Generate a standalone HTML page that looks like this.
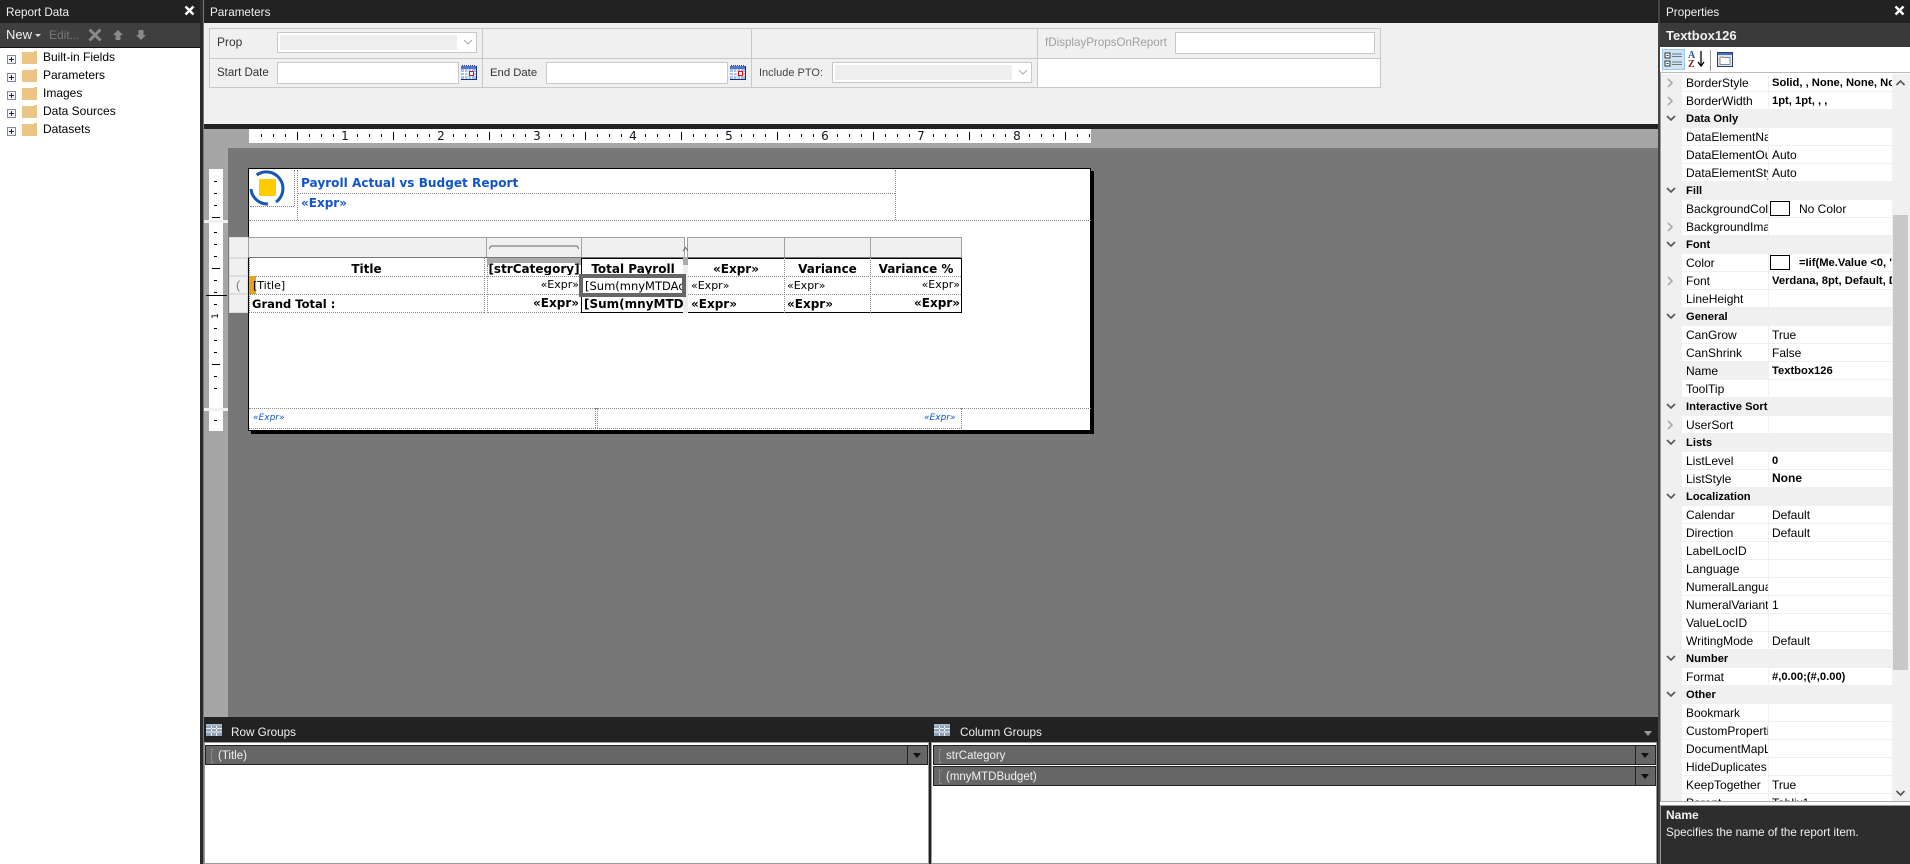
<!DOCTYPE html>
<html><head><meta charset="utf-8"><title>Report Designer</title>
<style>
html,body{margin:0;padding:0;width:1910px;height:864px;overflow:hidden;background:#222}
body{position:relative;font:12px/16px "Liberation Sans",sans-serif;color:#000}
.a{position:absolute}
.t{position:absolute;white-space:nowrap;line-height:16px}
.v{font-family:"DejaVu Sans","Liberation Sans",sans-serif}
.w{color:#f1f1f1}
.ln{position:absolute;background:#c8c8c8}
.inp{position:absolute;background:#fff;border:1px solid #c8c8c8;box-sizing:border-box}
.dh{position:absolute;border-top:1px dotted #888;height:0}
.dv{position:absolute;border-left:1px dotted #888;width:0}
.hc{position:absolute;background:#f0f0f0;border:1px solid #a0a0a0;box-sizing:border-box}
.rh{position:absolute;background:#f0f0f0;left:229px;width:19px;border:1px solid #ddd;box-sizing:border-box}
.b{font-weight:bold}
.cen{text-align:center}
.rgt{text-align:right}
.h{font-size:12px;font-weight:bold;font-family:"DejaVu Sans",sans-serif;line-height:16px}
.s{font-size:11px;font-family:"DejaVu Sans",sans-serif;line-height:16px}
.tk{position:absolute;background:#000}
.n{position:absolute;font:12px/14px "DejaVu Sans",sans-serif;background:#fff;width:12px;text-align:center;color:#112}
/* properties */
#pg{position:absolute;left:1661px;top:74px;width:231px;height:727px;overflow:hidden;background:#fff}
.r{position:relative;height:18px;white-space:nowrap;line-height:18px}
.r .l{position:absolute;left:25px;width:82px;height:17px;overflow:hidden}
.r .m{position:absolute;left:0;top:0;width:21px;height:18px;background:#f0f0f0}
.r .d{position:absolute;left:107px;top:0;width:1px;height:17px;background:#f0f0f0}
.r .u{position:absolute;left:21px;right:0;top:17px;height:1px;background:#f0f0f0}
.r .x{position:absolute;left:111px;width:120px;overflow:hidden;height:17px}
.r .x.b{font-size:11.2px;top:1px;height:16px;line-height:17px}
.r.c{background:#f0f0f0;font-weight:bold;font-size:11.2px}
.r.c .l{width:200px;top:1px;height:16px;line-height:17px}
.r svg{position:absolute;left:5px;top:4px}
.sel .l{background:#f0f0f0;left:21px;padding-left:4px;width:82px}
.gb{position:absolute;background:#666;border:1px solid #222;box-sizing:border-box;height:20px;color:#f1f1f1;font-size:11.5px}
.gb i{position:absolute;left:5px;top:3px;width:2px;height:12px;border:1px solid #888;border-right:none}
.gb span{position:absolute;top:2px;white-space:nowrap}
.gb b{position:absolute;right:0;top:0;bottom:0;width:19px;border-left:1px solid #222}
.gb b:after{content:"";position:absolute;left:5px;top:7px;border:4px solid transparent;border-top:5px solid #111;border-bottom:none}
</style></head>
<body>

<!-- LEFT PANEL -->
<div class="a" style="left:0;top:0;width:200px;height:864px;background:#fff"></div>
<div class="a" style="left:0;top:0;width:203px;height:23px;background:#222"></div>
<div class="a" style="left:0;top:23px;width:200px;height:24px;background:#3f3f3f;border-bottom:1px solid #111"></div>
<div class="a" style="left:200px;top:0;width:3px;height:864px;background:#2a2a2a"></div>
<div class="a" style="left:203px;top:0;width:1px;height:864px;background:#777"></div>
<div class="t w" style="left:6px;top:5px;font-size:11.7px">Report Data</div>
<svg class="a" style="left:184px;top:5px" width="11" height="11"><path d="M1.5 1.5L9.5 9.5M9.5 1.5L1.5 9.5" stroke="#fff" stroke-width="2.4"/></svg>
<div class="t w" style="left:6px;top:27px;font-size:13px">New</div>
<div class="a" style="left:35px;top:34px;border:3px solid transparent;border-top:3px solid #ddd;border-bottom:none"></div>
<div class="t" style="left:49px;top:27px;color:#777;font-size:12px">Edit...</div>
<svg class="a" style="left:88px;top:28px" width="14" height="14"><path d="M1.5 1.5L12.5 12.5M12.5 1.5L1.5 12.5" stroke="#8a8a8a" stroke-width="3"/></svg>
<svg class="a" style="left:112px;top:29px" width="12" height="12"><path d="M6 1L11 6H8.5V11H3.5V6H1Z" fill="#8a8a8a"/></svg>
<svg class="a" style="left:135px;top:29px" width="12" height="12"><path d="M6 11L11 6H8.5V1H3.5V6H1Z" fill="#8a8a8a"/></svg>

<!-- tree -->
<svg class="a" style="left:7px;top:49px" width="32" height="100">
 <g>
  <g transform="translate(0,0)"><rect x=".5" y="6.5" width="8" height="8" fill="#f4f6fb" stroke="#7f8aa0"/><path d="M2 10.5H7M4.5 8V13" stroke="#223" stroke-width="1"/><path d="M15 3H27V2H30V15H15Z" fill="#eac584"/></g>
  <g transform="translate(0,18)"><rect x=".5" y="6.5" width="8" height="8" fill="#f4f6fb" stroke="#7f8aa0"/><path d="M2 10.5H7M4.5 8V13" stroke="#223" stroke-width="1"/><path d="M15 3H27V2H30V15H15Z" fill="#eac584"/></g>
  <g transform="translate(0,36)"><rect x=".5" y="6.5" width="8" height="8" fill="#f4f6fb" stroke="#7f8aa0"/><path d="M2 10.5H7M4.5 8V13" stroke="#223" stroke-width="1"/><path d="M15 3H27V2H30V15H15Z" fill="#eac584"/></g>
  <g transform="translate(0,54)"><rect x=".5" y="6.5" width="8" height="8" fill="#f4f6fb" stroke="#7f8aa0"/><path d="M2 10.5H7M4.5 8V13" stroke="#223" stroke-width="1"/><path d="M15 3H27V2H30V15H15Z" fill="#eac584"/></g>
  <g transform="translate(0,72)"><rect x=".5" y="6.5" width="8" height="8" fill="#f4f6fb" stroke="#7f8aa0"/><path d="M2 10.5H7M4.5 8V13" stroke="#223" stroke-width="1"/><path d="M15 3H27V2H30V15H15Z" fill="#eac584"/></g>
 </g>
</svg>
<div class="t" style="left:43px;top:49px">Built-in Fields</div>
<div class="t" style="left:43px;top:67px">Parameters</div>
<div class="t" style="left:43px;top:85px">Images</div>
<div class="t" style="left:43px;top:103px">Data Sources</div>
<div class="t" style="left:43px;top:121px">Datasets</div>

<!-- PARAMETERS -->
<div class="a" style="left:204px;top:0;width:1456px;height:23px;background:#222"></div>
<div class="t w" style="left:210px;top:5px;font-size:11.7px">Parameters</div>
<div class="a" style="left:204px;top:23px;width:1456px;height:101px;background:#f0f0f0"></div>
<div class="a" style="left:204px;top:124px;width:1456px;height:5px;background:#222"></div>

<div class="a" style="left:1037px;top:58px;width:343px;height:30px;background:#fff"></div>
<div class="ln" style="left:209px;top:28px;width:1172px;height:1px"></div>
<div class="ln" style="left:209px;top:58px;width:1172px;height:1px"></div>
<div class="ln" style="left:209px;top:87px;width:1172px;height:1px"></div>
<div class="ln" style="left:209px;top:28px;width:1px;height:60px"></div>
<div class="ln" style="left:482px;top:28px;width:1px;height:60px"></div>
<div class="ln" style="left:751px;top:28px;width:1px;height:60px"></div>
<div class="ln" style="left:1037px;top:28px;width:1px;height:60px"></div>
<div class="ln" style="left:1380px;top:28px;width:1px;height:60px"></div>

<div class="t" style="left:217px;top:34px;color:#333">Prop</div>
<div class="inp" style="left:277px;top:32px;width:200px;height:21px"><div class="a" style="left:2px;top:2px;width:177px;height:15px;background:#eee"></div></div>
<svg class="a" style="left:463px;top:39px" width="10" height="7"><path d="M1 1L5 5L9 1" fill="none" stroke="#aaa"/></svg>

<div class="t" style="left:217px;top:65px;color:#333;font-size:11.5px">Start Date</div>
<div class="inp" style="left:277px;top:62px;width:182px;height:22px"></div>
<svg class="a" style="left:461px;top:65px" width="16" height="15"><path d="M1 0.5H15" stroke="#2a3a70" stroke-dasharray="1 1"/><rect x="0" y="1" width="16" height="3" fill="#4f76cc"/><rect x="0" y="4" width="16" height="10" fill="#a9c0ee"/><path d="M0 7.5H16M0 10.5H16M3.5 4V14M7 4V14M10.5 4V14" stroke="#fff"/><path d="M0 14.5H16M15.5 1V15" stroke="#1c2f6e"/><rect x="8.5" y="6.5" width="4" height="4" fill="#fff" stroke="#e01010"/></svg>

<div class="t" style="left:490px;top:65px;color:#333;font-size:11.3px">End Date</div>
<div class="inp" style="left:546px;top:62px;width:182px;height:22px"></div>
<svg class="a" style="left:730px;top:65px" width="16" height="15"><path d="M1 0.5H15" stroke="#2a3a70" stroke-dasharray="1 1"/><rect x="0" y="1" width="16" height="3" fill="#4f76cc"/><rect x="0" y="4" width="16" height="10" fill="#a9c0ee"/><path d="M0 7.5H16M0 10.5H16M3.5 4V14M7 4V14M10.5 4V14" stroke="#fff"/><path d="M0 14.5H16M15.5 1V15" stroke="#1c2f6e"/><rect x="8.5" y="6.5" width="4" height="4" fill="#fff" stroke="#e01010"/></svg>

<div class="t" style="left:759px;top:65px;color:#444;font-size:11px">Include PTO:</div>
<div class="inp" style="left:832px;top:62px;width:200px;height:21px"><div class="a" style="left:2px;top:2px;width:177px;height:15px;background:#eee"></div></div>
<svg class="a" style="left:1018px;top:69px" width="10" height="7"><path d="M1 1L5 5L9 1" fill="none" stroke="#aaa"/></svg>

<div class="t" style="left:1045px;top:35px;color:#a0a0a0;font-size:11.6px">fDisplayPropsOnReport</div>
<div class="inp" style="left:1175px;top:32px;width:200px;height:22px"></div>

<!-- DESIGN AREA -->
<div class="a" style="left:204px;top:129px;width:1456px;height:19px;background:#a5a5a5"></div>
<div class="a" style="left:204px;top:148px;width:1456px;height:569px;background:#777"></div>
<div class="a" style="left:204px;top:148px;width:24px;height:569px;background:#a5a5a5"></div>

<!-- top ruler -->
<div class="a" style="left:249px;top:129px;width:842px;height:14px;background:#fff"></div>
<div class="a" style="left:261px;top:134px;width:830px;height:3px;background:repeating-linear-gradient(90deg,#000 0,#000 1px,transparent 1px,transparent 12px)"></div>
<div class="a" style="left:297px;top:132px;width:794px;height:8px;background:repeating-linear-gradient(90deg,#000 0,#000 1px,transparent 1px,transparent 96px)"></div>
<div class="n" style="left:339px;top:129px">1</div><div class="n" style="left:435px;top:129px">2</div><div class="n" style="left:531px;top:129px">3</div><div class="n" style="left:627px;top:129px">4</div><div class="n" style="left:723px;top:129px">5</div><div class="n" style="left:819px;top:129px">6</div><div class="n" style="left:915px;top:129px">7</div><div class="n" style="left:1011px;top:129px">8</div>

<!-- vertical ruler -->
<div class="a" style="left:209px;top:169px;width:14px;height:262px;background:#fff"></div>
<div class="a" style="left:214px;top:181px;width:3px;height:36px;background:repeating-linear-gradient(180deg,#000 0,#000 1px,transparent 1px,transparent 12px)"></div>
<div class="tk" style="left:212px;top:217px;width:8px;height:1px"></div>
<div class="a" style="left:204px;top:220px;width:24px;height:3px;background:#f0f0f0"></div>
<div class="a" style="left:214px;top:232px;width:3px;height:168px;background:repeating-linear-gradient(180deg,#000 0,#000 1px,transparent 1px,transparent 12px)"></div>
<div class="tk" style="left:212px;top:268px;width:8px;height:1px"></div>
<div class="tk" style="left:212px;top:364px;width:8px;height:1px"></div>
<div class="tk" style="left:206px;top:295px;width:21px;height:1px"></div>
<div class="t" style="left:209px;top:309px;width:14px;text-align:center;font:9px/14px 'DejaVu Sans',sans-serif;transform:rotate(-90deg);background:#fff;height:14px">1</div>
<div class="a" style="left:204px;top:408px;width:24px;height:3px;background:#f0f0f0"></div>
<div class="tk" style="left:214px;top:420px;width:3px;height:1px"></div>

<!-- PAGE -->
<div class="a" style="left:251px;top:171px;width:843px;height:263px;background:#000"></div>
<div class="a" style="left:248px;top:168px;width:843px;height:263px;background:#fff;border:1px solid #000;box-sizing:border-box"></div>

<!-- logo -->
<svg class="a" style="left:249px;top:169px" width="38" height="38">
 <path d="M7.7 6A16.5 16.5 0 0 1 27 33" fill="none" stroke="#1656b4" stroke-width="3"/>
 <path d="M2 20A16.5 16.5 0 0 0 19 35" fill="none" stroke="#1656b4" stroke-width="3"/>
 <rect x="10" y="10" width="17" height="17" rx="1" fill="#ffcc00"/>
</svg>
<div class="dv" style="left:294px;top:170px;height:36px"></div>
<div class="dh" style="left:250px;top:206px;width:44px"></div>
<div class="dv" style="left:297px;top:170px;height:50px"></div>
<div class="dh" style="left:297px;top:193px;width:598px"></div>
<div class="dv" style="left:895px;top:170px;height:50px"></div>
<div class="dh" style="left:249px;top:220px;width:842px"></div>
<div class="t b v" style="left:301px;top:174px;font-size:12.1px;color:#1155cc;line-height:18px">Payroll Actual vs Budget Report</div>
<div class="t b v" style="left:301px;top:195px;font-size:12px;color:#1155cc">«Expr»</div>

<!-- tablix handles -->
<div class="hc" style="left:229px;top:237px;width:20px;height:21px;border-color:#ddd"></div>
<div class="hc" style="left:248px;top:237px;width:239px;height:21px"></div>
<div class="hc" style="left:486px;top:237px;width:96px;height:21px"></div>
<div class="hc" style="left:581px;top:237px;width:104px;height:21px"></div>
<div class="hc" style="left:687px;top:237px;width:98px;height:21px"></div>
<div class="hc" style="left:784px;top:237px;width:87px;height:21px"></div>
<div class="hc" style="left:870px;top:237px;width:92px;height:21px"></div>
<svg class="a" style="left:489px;top:244px" width="90" height="6"><path d="M0 5L2 2H88L90 5" fill="none" stroke="#666"/></svg>
<div class="a" style="left:248px;top:257px;width:714px;height:1px;background:#777"></div>
<div class="rh" style="top:258px;height:18px"></div>
<div class="rh" style="top:276px;height:18px"></div>
<div class="rh" style="top:294px;height:19px"></div>
<div class="t" style="left:236px;top:277px;color:#777">(</div>

<!-- tablix body -->
<div class="a" style="left:487px;top:258px;width:94px;height:7px;background:#aaa"></div>
<div class="a" style="left:489px;top:263px;width:88px;height:12px;background:#fff"></div>
<div class="a" style="left:581px;top:258px;width:381px;height:55px;border:1px solid #000;box-sizing:border-box"></div>
<div class="dh" style="left:249px;top:276px;width:712px"></div>
<div class="dh" style="left:249px;top:294px;width:712px"></div>
<div class="dh" style="left:249px;top:312px;width:235px"></div>
<div class="dh" style="left:487px;top:312px;width:94px"></div>
<div class="dv" style="left:249px;top:258px;height:55px"></div>
<div class="dv" style="left:484px;top:258px;height:55px"></div>
<div class="dv" style="left:487px;top:265px;height:48px"></div>
<div class="dv" style="left:784px;top:258px;height:55px"></div>
<div class="dv" style="left:870px;top:258px;height:55px"></div>
<div class="a" style="left:683px;top:258px;width:5px;height:55px;background:#eee"></div>
<div class="a" style="left:683px;top:257px;width:5px;height:8px;background:#aaa"></div>
<svg class="a" style="left:682px;top:246px" width="7" height="6"><path d="M1 5L3.5 1.5L6 5" fill="none" stroke="#666"/></svg>

<div class="a" style="left:249px;top:276px;width:7px;height:18px;background:#e8a31e"></div>

<div class="t h cen" style="left:250px;top:261px;width:233px">Title</div>
<div class="a" style="left:487px;top:262px;width:94px;height:13px;overflow:hidden"><div class="t h" style="left:0;top:-1px;width:94px;text-align:center">[strCategory]</div></div>
<div class="t h cen" style="left:582px;top:261px;width:102px">Total Payroll</div>
<div class="t h cen" style="left:688px;top:261px;width:96px">«Expr»</div>
<div class="t h cen" style="left:785px;top:261px;width:85px">Variance</div>
<div class="t h cen" style="left:871px;top:261px;width:90px">Variance %</div>

<div class="t s" style="left:253px;top:278px">[Title]</div>
<div class="t s rgt" style="left:488px;top:277px;width:91px">«Expr»</div>
<div class="t s" style="left:691px;top:278px">«Expr»</div>
<div class="t s" style="left:787px;top:278px">«Expr»</div>
<div class="t s rgt" style="left:871px;top:277px;width:89px">«Expr»</div>

<div class="t b v" style="left:252px;top:296px;font-size:11.5px">Grand Total :</div>
<div class="t b v rgt" style="left:488px;top:295px;width:91px;font-size:12px">«Expr»</div>
<div class="a" style="left:583px;top:296px;width:100px;height:16px;overflow:hidden"><div class="t h" style="left:1px;top:0">[Sum(mnyMTDActual)]</div></div>
<div class="t b v" style="left:691px;top:296px;font-size:12px">«Expr»</div>
<div class="t b v" style="left:787px;top:296px;font-size:12px">«Expr»</div>
<div class="t b v rgt" style="left:871px;top:295px;width:89px;font-size:12px">«Expr»</div>

<!-- selected -->
<div class="a" style="left:579px;top:274px;width:107px;height:23px;border:4px solid #666;box-sizing:border-box;background:#fff;overflow:hidden"><div class="t s" style="left:2px;top:-0.5px;font-size:11.5px">[Sum(mnyMTDActual)]</div></div>

<!-- footer -->
<div class="dh" style="left:249px;top:408px;width:842px"></div>
<div class="dh" style="left:249px;top:428px;width:713px"></div>
<div class="dv" style="left:595px;top:408px;height:20px"></div>
<div class="dv" style="left:597px;top:408px;height:20px"></div>
<div class="dv" style="left:961px;top:408px;height:20px"></div>
<div class="t v" style="left:253px;top:410px;font-size:9px;font-style:italic;color:#1155cc">«Expr»</div>
<div class="t v" style="left:924px;top:410px;font-size:9px;font-style:italic;color:#1155cc">«Expr»</div>

<!-- BOTTOM GROUPS -->
<div class="a" style="left:204px;top:717px;width:1456px;height:25px;background:#222"></div>
<div class="a" style="left:204px;top:742px;width:725px;height:122px;background:#fff;border:1px solid #999;box-sizing:border-box"></div>
<div class="a" style="left:929px;top:742px;width:2px;height:122px;background:#222"></div>
<div class="a" style="left:931px;top:742px;width:726px;height:122px;background:#fff;border:1px solid #999;box-sizing:border-box"></div>
<div class="a" style="left:1657px;top:717px;width:3px;height:147px;background:#222"></div>

<svg class="a" style="left:206px;top:724px" width="16" height="12"><rect width="16" height="12" fill="#8ea2b8"/><path d="M0 4H16V5H0ZM0 7.5H16V8.5H0ZM5 0V12H6V0ZM10 0V12H11V0Z" fill="#f3f3f3"/><rect x="0" y="0" width="16" height="2" fill="#a8b8c8"/></svg>
<div class="t w" style="left:231px;top:725px;font-size:11.7px">Row Groups</div>
<svg class="a" style="left:934px;top:724px" width="16" height="12"><rect width="16" height="12" fill="#8ea2b8"/><path d="M0 4H16V5H0ZM0 7.5H16V8.5H0ZM5 0V12H6V0ZM10 0V12H11V0Z" fill="#f3f3f3"/><rect x="0" y="0" width="16" height="2" fill="#a8b8c8"/></svg>
<div class="t w" style="left:960px;top:725px;font-size:11.7px">Column Groups</div>
<div class="a" style="left:1644px;top:731px;border:4px solid transparent;border-top:5px solid #999;border-bottom:none"></div>

<div class="gb" style="left:205px;top:745px;width:723px"><i></i><span style="left:12px">(Title)</span><b></b></div>
<div class="gb" style="left:933px;top:745px;width:723px"><i></i><span style="left:12px">strCategory</span><b></b></div>
<div class="gb" style="left:933px;top:766px;width:723px"><i></i><span style="left:12px">(mnyMTDBudget)</span><b></b></div>

<!-- PROPERTIES -->
<div class="a" style="left:1660px;top:0;width:250px;height:864px;background:#fff"></div>
<div class="a" style="left:1658px;top:0;width:2px;height:864px;background:#444"></div>
<div class="a" style="left:1660px;top:0;width:250px;height:23px;background:#222"></div>
<div class="t w" style="left:1666px;top:5px;font-size:11.7px">Properties</div>
<svg class="a" style="left:1894px;top:5px" width="11" height="11"><path d="M1.5 1.5L9.5 9.5M9.5 1.5L1.5 9.5" stroke="#fff" stroke-width="2.4"/></svg>
<div class="a" style="left:1660px;top:23px;width:250px;height:24px;background:#3a3a3a"></div>
<div class="t b w" style="left:1666px;top:28px;font-size:13px">Textbox126</div>

<div class="a" style="left:1662px;top:49px;width:23px;height:21px;background:#cde4f7;border:1px solid #9cc8ee;box-sizing:border-box"></div>
<svg class="a" style="left:1664px;top:52px" width="20" height="16"><rect x="1" y="1" width="5" height="5" fill="#fff" stroke="#333"/><rect x="1" y="9" width="5" height="5" fill="#fff" stroke="#333"/><path d="M2.5 3.5H4.5M2.5 11.5H4.5" stroke="#333"/><path d="M8 2H18M8 4.5H18M8 10H18M8 12.5H18" stroke="#777"/></svg>
<div class="t b" style="left:1688px;top:50px;font:bold 10px/11px 'Liberation Serif',serif;color:#2a4fa0">A</div>
<div class="t b" style="left:1688px;top:59px;font:bold 10px/11px 'Liberation Serif',serif;color:#8a2020">Z</div>
<svg class="a" style="left:1697px;top:51px" width="8" height="17"><path d="M4 0V14M1 11L4 15L7 11" fill="none" stroke="#000" stroke-width="1.3"/></svg>
<div class="a" style="left:1710px;top:50px;width:1px;height:21px;background:#999"></div>
<svg class="a" style="left:1717px;top:52px" width="16" height="15"><rect x=".5" y=".5" width="15" height="14" fill="#dfe6f4" stroke="#2a3a6a"/><rect x="1" y="1" width="14" height="2" fill="#4a6fc0"/><rect x="3" y="5.5" width="10" height="7" fill="#fff" stroke="#888"/><path d="M3 6H7V4.5H3Z" fill="#c9a860"/></svg>
<div class="a" style="left:1660px;top:72px;width:250px;height:1px;background:#bbb"></div>
<div class="a" style="left:1660px;top:73px;width:1px;height:728px;background:#999"></div>

<div id="pg">
<div class="r"><span class="m"></span><svg width="9" height="10"><path d="M2 1L6 5L2 9" fill="none" stroke="#aaa" stroke-width="1.6"/></svg><span class="l">BorderStyle</span><span class="d"></span><span class="x b">Solid, , None, None, None</span><span class="u"></span></div>
<div class="r"><span class="m"></span><svg width="9" height="10"><path d="M2 1L6 5L2 9" fill="none" stroke="#aaa" stroke-width="1.6"/></svg><span class="l">BorderWidth</span><span class="d"></span><span class="x b">1pt, 1pt, , ,</span><span class="u"></span></div>
<div class="r c"><svg width="10" height="9"><path d="M1 2L5 6L9 2" fill="none" stroke="#555" stroke-width="1.6"/></svg><span class="l">Data Only</span></div>
<div class="r"><span class="m"></span><span class="l">DataElementName</span><span class="d"></span><span class="u"></span></div>
<div class="r"><span class="m"></span><span class="l">DataElementOutput</span><span class="d"></span><span class="x">Auto</span><span class="u"></span></div>
<div class="r"><span class="m"></span><span class="l">DataElementStyle</span><span class="d"></span><span class="x">Auto</span><span class="u"></span></div>
<div class="r c"><svg width="10" height="9"><path d="M1 2L5 6L9 2" fill="none" stroke="#555" stroke-width="1.6"/></svg><span class="l">Fill</span></div>
<div class="r"><span class="m"></span><span class="l">BackgroundColor</span><span class="d"></span><span class="a" style="left:109px;top:1px;width:20px;height:15px;border:1px solid #000;box-sizing:border-box;background:#fff"></span><span class="x" style="left:138px;width:90px">No Color</span><span class="u"></span></div>
<div class="r"><span class="m"></span><svg width="9" height="10"><path d="M2 1L6 5L2 9" fill="none" stroke="#aaa" stroke-width="1.6"/></svg><span class="l">BackgroundImage</span><span class="d"></span><span class="u"></span></div>
<div class="r c"><svg width="10" height="9"><path d="M1 2L5 6L9 2" fill="none" stroke="#555" stroke-width="1.6"/></svg><span class="l">Font</span></div>
<div class="r"><span class="m"></span><span class="l">Color</span><span class="d"></span><span class="a" style="left:109px;top:1px;width:20px;height:15px;border:1px solid #000;box-sizing:border-box;background:#fff"></span><span class="x b" style="left:138px;width:93px">=Iif(Me.Value &lt;0, "Red", "Black")</span><span class="u"></span></div>
<div class="r"><span class="m"></span><svg width="9" height="10"><path d="M2 1L6 5L2 9" fill="none" stroke="#aaa" stroke-width="1.6"/></svg><span class="l">Font</span><span class="d"></span><span class="x b">Verdana, 8pt, Default, Default</span><span class="u"></span></div>
<div class="r"><span class="m"></span><span class="l">LineHeight</span><span class="d"></span><span class="u"></span></div>
<div class="r c"><svg width="10" height="9"><path d="M1 2L5 6L9 2" fill="none" stroke="#555" stroke-width="1.6"/></svg><span class="l">General</span></div>
<div class="r"><span class="m"></span><span class="l">CanGrow</span><span class="d"></span><span class="x">True</span><span class="u"></span></div>
<div class="r"><span class="m"></span><span class="l">CanShrink</span><span class="d"></span><span class="x">False</span><span class="u"></span></div>
<div class="r sel"><span class="m"></span><span class="l">Name</span><span class="d"></span><span class="x b">Textbox126</span><span class="u"></span></div>
<div class="r"><span class="m"></span><span class="l">ToolTip</span><span class="d"></span><span class="u"></span></div>
<div class="r c"><svg width="10" height="9"><path d="M1 2L5 6L9 2" fill="none" stroke="#555" stroke-width="1.6"/></svg><span class="l">Interactive Sort</span></div>
<div class="r"><span class="m"></span><svg width="9" height="10"><path d="M2 1L6 5L2 9" fill="none" stroke="#aaa" stroke-width="1.6"/></svg><span class="l">UserSort</span><span class="d"></span><span class="u"></span></div>
<div class="r c"><svg width="10" height="9"><path d="M1 2L5 6L9 2" fill="none" stroke="#555" stroke-width="1.6"/></svg><span class="l">Lists</span></div>
<div class="r"><span class="m"></span><span class="l">ListLevel</span><span class="d"></span><span class="x b">0</span><span class="u"></span></div>
<div class="r"><span class="m"></span><span class="l">ListStyle</span><span class="d"></span><span class="x b" style="font-size:12px;top:0">None</span><span class="u"></span></div>
<div class="r c"><svg width="10" height="9"><path d="M1 2L5 6L9 2" fill="none" stroke="#555" stroke-width="1.6"/></svg><span class="l">Localization</span></div>
<div class="r"><span class="m"></span><span class="l">Calendar</span><span class="d"></span><span class="x">Default</span><span class="u"></span></div>
<div class="r"><span class="m"></span><span class="l">Direction</span><span class="d"></span><span class="x">Default</span><span class="u"></span></div>
<div class="r"><span class="m"></span><span class="l">LabelLocID</span><span class="d"></span><span class="u"></span></div>
<div class="r"><span class="m"></span><span class="l">Language</span><span class="d"></span><span class="u"></span></div>
<div class="r"><span class="m"></span><span class="l">NumeralLanguage</span><span class="d"></span><span class="u"></span></div>
<div class="r"><span class="m"></span><span class="l">NumeralVariant</span><span class="d"></span><span class="x">1</span><span class="u"></span></div>
<div class="r"><span class="m"></span><span class="l">ValueLocID</span><span class="d"></span><span class="u"></span></div>
<div class="r"><span class="m"></span><span class="l">WritingMode</span><span class="d"></span><span class="x">Default</span><span class="u"></span></div>
<div class="r c"><svg width="10" height="9"><path d="M1 2L5 6L9 2" fill="none" stroke="#555" stroke-width="1.6"/></svg><span class="l">Number</span></div>
<div class="r"><span class="m"></span><span class="l">Format</span><span class="d"></span><span class="x b">#,0.00;(#,0.00)</span><span class="u"></span></div>
<div class="r c"><svg width="10" height="9"><path d="M1 2L5 6L9 2" fill="none" stroke="#555" stroke-width="1.6"/></svg><span class="l">Other</span></div>
<div class="r"><span class="m"></span><span class="l">Bookmark</span><span class="d"></span><span class="u"></span></div>
<div class="r"><span class="m"></span><span class="l">CustomProperties</span><span class="d"></span><span class="u"></span></div>
<div class="r"><span class="m"></span><span class="l">DocumentMapLabel</span><span class="d"></span><span class="u"></span></div>
<div class="r"><span class="m"></span><span class="l">HideDuplicates</span><span class="d"></span><span class="u"></span></div>
<div class="r"><span class="m"></span><span class="l">KeepTogether</span><span class="d"></span><span class="x">True</span><span class="u"></span></div>
<div class="r"><span class="m"></span><span class="l">Parent</span><span class="d"></span><span class="x">Tablix1</span><span class="u"></span></div>
</div>

<!-- prop scrollbar -->
<div class="a" style="left:1892px;top:74px;width:18px;height:727px;background:#f0f0f0"></div>
<div class="a" style="left:1893px;top:215px;width:15px;height:455px;background:#c8c8c8"></div>
<svg class="a" style="left:1895px;top:79px" width="11" height="8"><path d="M1.5 6L5.5 2L9.5 6" fill="none" stroke="#555" stroke-width="1.6"/></svg>
<svg class="a" style="left:1895px;top:789px" width="11" height="8"><path d="M1.5 2L5.5 6L9.5 2" fill="none" stroke="#555" stroke-width="1.6"/></svg>
<div class="a" style="left:1660px;top:801px;width:250px;height:1px;background:#aaa"></div>
<div class="a" style="left:1660px;top:805px;width:250px;height:59px;background:#2d2d2d;border-top:1px solid #999;border-left:1px solid #999;box-sizing:border-box"></div>
<div class="t b w" style="left:1666px;top:807px">Name</div>
<div class="t w" style="left:1666px;top:825px;font-size:11.6px">Specifies the name of the report item.</div>

</body></html>
